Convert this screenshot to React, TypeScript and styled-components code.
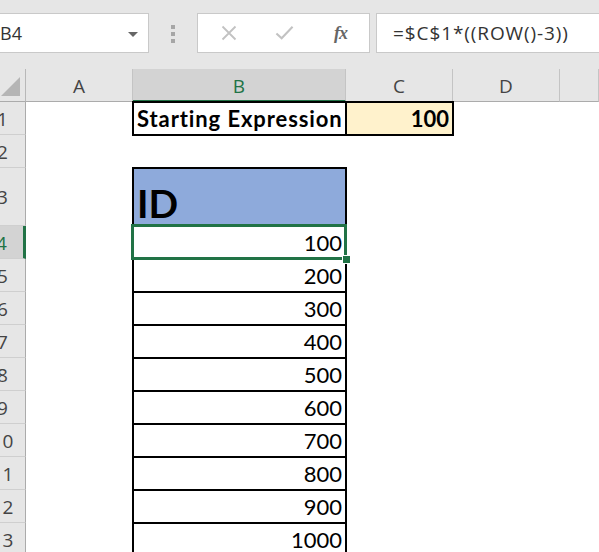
import styled, { createGlobalStyle, css } from "styled-components";

const GlobalStyle = createGlobalStyle`
  html, body {
    margin: 0;
    padding: 0;
    background: #ffffff;
    overflow: hidden;
  }
  body {
    font-family: "Open Sans", "Liberation Sans", sans-serif;
  }
`;

const GREEN = "#217346";

const Window = styled.div`
  width: 599px;
  height: 552px;
  overflow: hidden;
  background: #ffffff;
`;

const FormulaBar = styled.div`
  height: 69px;
  background: #e6e6e6;
  display: flex;
  align-items: flex-start;
  padding-top: 13px;
  box-sizing: border-box;
`;

const BarBox = styled.div`
  height: 40px;
  box-sizing: border-box;
  background: #ffffff;
  border: 1px solid #c9c9c9;
  display: flex;
  align-items: center;
`;

const NameBox = styled(BarBox)`
  width: 149px;
  border-left: none;
  justify-content: space-between;
  padding: 0 10px 0 0;
  font-size: 18px;
  color: #333333;
`;

const DropArrow = styled.span`
  width: 0;
  height: 0;
  border-left: 5px solid transparent;
  border-right: 5px solid transparent;
  border-top: 5px solid #666666;
  margin-top: 2px;
`;

const Dots = styled.div`
  width: 4px;
  margin: 12px 22px 0;
  display: flex;
  flex-direction: column;
  gap: 3px;

  span {
    width: 4px;
    height: 4px;
    background: #a6a6a6;
  }
`;

const FunctionBox = styled(BarBox)`
  width: 173px;
  padding-left: 21px;
  gap: 37px;
`;

const IconSlot = styled.span`
  width: 19px;
  display: flex;
  justify-content: center;
`;

const Fx = styled.span`
  font-family: "Liberation Serif", serif;
  font-style: italic;
  font-weight: 700;
  font-size: 18px;
  color: #666666;
  letter-spacing: -1px;
`;

const FormulaInput = styled(BarBox)`
  flex: 1;
  margin-left: 6px;
  margin-right: -10px;
  padding-left: 16px;
  font-size: 19px;
  letter-spacing: 0.9px;
  color: #333333;
`;

const Sheet = styled.div`
  display: grid;
  grid-template-columns: 46px 107px 213px 107px 107px 1fr;
  grid-template-rows: 33px 33px 33px 58px repeat(10, 33px);
  margin-left: -20px;
`;

const Corner = styled.div`
  background: #e6e6e6;
  border-right: 1px solid #b8b8b8;
  border-bottom: 1px solid #ababab;
  display: flex;
  align-items: flex-end;
  justify-content: flex-end;
  padding: 0 5px 5px 0;
`;

const ColHead = styled.div<{ $active?: boolean }>`
  background: #e6e6e6;
  border-right: 1px solid #c4c4c4;
  border-bottom: 1px solid #ababab;
  display: flex;
  align-items: center;
  justify-content: center;
  font-size: 19px;
  color: #444444;
  padding-top: 2px;

  ${(p) =>
    p.$active &&
    css`
      background: #d3d3d3;
      color: ${GREEN};
      border-bottom: 2px solid ${GREEN};
    `}
`;

const RowHead = styled.div<{ $active?: boolean }>`
  background: #e6e6e6;
  border-right: 1px solid #ababab;
  border-bottom: 1px solid #cfcfcf;
  display: flex;
  align-items: center;
  justify-content: center;
  font-size: 19px;
  color: #444444;
  padding-top: 1px;

  ${(p) =>
    p.$active &&
    css`
      background: #d3d3d3;
      color: ${GREEN};
      border-right: 3px solid ${GREEN};
    `}
`;

const Cell = styled.div<{
  $bordered?: boolean;
  $fill?: string;
  $bold?: boolean;
  $size?: number;
  $spacing?: number;
  $right?: boolean;
  $selected?: boolean;
}>`
  position: relative;
  box-sizing: border-box;
  display: flex;
  align-items: flex-end;
  justify-content: ${(p) => (p.$right ? "flex-end" : "flex-start")};
  padding: 0 4px 3px 4px;
  font-family: Lato, "Open Sans", sans-serif;
  font-size: ${(p) => p.$size ?? 22}px;
  font-weight: ${(p) => (p.$bold ? 700 : 400)};
  letter-spacing: ${(p) => p.$spacing ?? 0}px;
  color: #000000;
  background: ${(p) => p.$fill ?? "transparent"};
  white-space: nowrap;

  ${(p) =>
    p.$bordered &&
    css`
      outline: 1px solid #000000;
      box-shadow: inset 0 0 0 1px #000000;
    `}

  ${(p) =>
    p.$selected &&
    css`
      z-index: 2;
      box-shadow: none;
      &::after {
        content: "";
        position: absolute;
        inset: -2px -1px -1px -2px;
        border: 3px solid ${GREEN};
        pointer-events: none;
      }
    `}
`;

const FillHandle = styled.span`
  position: absolute;
  right: -5px;
  bottom: -5px;
  width: 7px;
  height: 7px;
  background: ${GREEN};
  border: 1px solid #ffffff;
  z-index: 3;
`;

const columns = ["A", "B", "C", "D", ""];

export default function App() {
  const ids = [100, 200, 300, 400, 500, 600, 700, 800, 900, 1000];

  return (
    <Window>
      <GlobalStyle />
      <FormulaBar>
        <NameBox>
          <span>B4</span>
          <DropArrow />
        </NameBox>
        <Dots>
          <span />
          <span />
          <span />
        </Dots>
        <FunctionBox>
          <IconSlot>
            <svg width="16" height="16" viewBox="0 0 16 16">
              <path d="M1.5 1.5 L14.5 14.5 M14.5 1.5 L1.5 14.5" stroke="#c2c2c2" strokeWidth="1.8" fill="none" />
            </svg>
          </IconSlot>
          <IconSlot>
            <svg width="20" height="16" viewBox="0 0 20 16">
              <path d="M1.5 8.5 L7 13.5 L18.5 1.5" stroke="#c2c2c2" strokeWidth="2.2" fill="none" />
            </svg>
          </IconSlot>
          <IconSlot>
            <Fx>fx</Fx>
          </IconSlot>
        </FunctionBox>
        <FormulaInput>=$C$1*((ROW()-3))</FormulaInput>
      </FormulaBar>

      <Sheet>
        <Corner>
          <svg width="19" height="19" viewBox="0 0 19 19">
            <polygon points="19,0 19,19 0,19" fill="#b5b5b5" />
          </svg>
        </Corner>
        {columns.map((c) => (
          <ColHead key={c || "E"} $active={c === "B"}>
            {c}
          </ColHead>
        ))}

        <RowHead>1</RowHead>
        <Cell />
        <Cell $bordered $bold $spacing={0.9} $fill="#ffffff">
          Starting Expression
        </Cell>
        <Cell $bordered $bold $right $fill="#fff2cc">
          100
        </Cell>
        <Cell />
        <Cell />

        <RowHead>2</RowHead>
        <Cell />
        <Cell />
        <Cell />
        <Cell />
        <Cell />

        <RowHead>3</RowHead>
        <Cell />
        <Cell $bordered $bold $size={39} $fill="#8eaadb" style={{ paddingBottom: 0 }}>
          ID
        </Cell>
        <Cell />
        <Cell />
        <Cell />

        {ids.map((v, i) => (
          <Row key={v} n={i + 4} value={v} />
        ))}
      </Sheet>
    </Window>
  );
}

function Row({ n, value }: { n: number; value: number }) {
  const selected = n === 4;
  return (
    <>
      <RowHead $active={selected}>{n}</RowHead>
      <Cell />
      <Cell $bordered $right $selected={selected} $fill="#ffffff">
        {value}
        {selected && <FillHandle />}
      </Cell>
      <Cell />
      <Cell />
      <Cell />
    </>
  );
}
